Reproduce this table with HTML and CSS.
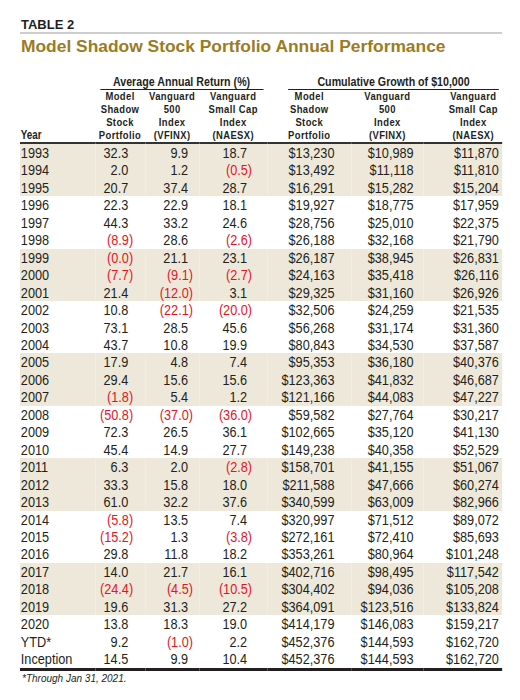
FILE: index.html
```html
<!DOCTYPE html>
<html lang="en">
<head>
<meta charset="UTF-8">
<meta name="viewport" content="width=device-width, initial-scale=1.0">
<title>Table 2 - Model Shadow Stock Portfolio Annual Performance</title>
<link rel="stylesheet" href="styles.css">
</head>
<body>
<div class="page">
<div class="label">TABLE 2</div>
<h1 class="title">Model Shadow Stock Portfolio Annual Performance</h1>

<div class="table-wrap">
<table class="perf">
<colgroup>
<col class="w-year"><col class="w-1"><col class="w-2"><col class="w-3"><col class="w-4"><col class="w-5"><col class="w-6">
</colgroup>
<thead>
<tr class="groups">
<th rowspan="2" class="h-year">Year</th>
<th colspan="3"><div class="group g-ret">Average Annual Return (%)</div></th>
<th colspan="3"><div class="group g-cum">Cumulative Growth of $10,000</div></th>
</tr>
<tr class="cols">
<th class="h1">Model<br>Shadow<br>Stock<br>Portfolio</th>
<th class="h2">Vanguard<br>500<br>Index<br>(VFINX)</th>
<th class="h3">Vanguard<br>Small Cap<br>Index<br>(NAESX)</th>
<th class="h4">Model<br>Shadow<br>Stock<br>Portfolio</th>
<th class="h5">Vanguard<br>500<br>Index<br>(VFINX)</th>
<th class="h6">Vanguard<br>Small Cap<br>Index<br>(NAESX)</th>
</tr>
</thead>
<tbody>
<tr class="band"><td>1993</td><td>32.3</td><td>9.9</td><td>18.7</td><td>$13,230</td><td>$10,989</td><td>$11,870</td></tr>
<tr class="band"><td>1994</td><td>2.0</td><td>1.2</td><td><span class="neg">(0.5)</span></td><td>$13,492</td><td>$11,118</td><td>$11,810</td></tr>
<tr class="band"><td>1995</td><td>20.7</td><td>37.4</td><td>28.7</td><td>$16,291</td><td>$15,282</td><td>$15,204</td></tr>
<tr><td>1996</td><td>22.3</td><td>22.9</td><td>18.1</td><td>$19,927</td><td>$18,775</td><td>$17,959</td></tr>
<tr><td>1997</td><td>44.3</td><td>33.2</td><td>24.6</td><td>$28,756</td><td>$25,010</td><td>$22,375</td></tr>
<tr><td>1998</td><td><span class="neg">(8.9)</span></td><td>28.6</td><td><span class="neg">(2.6)</span></td><td>$26,188</td><td>$32,168</td><td>$21,790</td></tr>
<tr class="band"><td>1999</td><td><span class="neg">(0.0)</span></td><td>21.1</td><td>23.1</td><td>$26,187</td><td>$38,945</td><td>$26,831</td></tr>
<tr class="band"><td>2000</td><td><span class="neg">(7.7)</span></td><td><span class="neg">(9.1)</span></td><td><span class="neg">(2.7)</span></td><td>$24,163</td><td>$35,418</td><td>$26,116</td></tr>
<tr class="band"><td>2001</td><td>21.4</td><td><span class="neg">(12.0)</span></td><td>3.1</td><td>$29,325</td><td>$31,160</td><td>$26,926</td></tr>
<tr><td>2002</td><td>10.8</td><td><span class="neg">(22.1)</span></td><td><span class="neg">(20.0)</span></td><td>$32,506</td><td>$24,259</td><td>$21,535</td></tr>
<tr><td>2003</td><td>73.1</td><td>28.5</td><td>45.6</td><td>$56,268</td><td>$31,174</td><td>$31,360</td></tr>
<tr><td>2004</td><td>43.7</td><td>10.8</td><td>19.9</td><td>$80,843</td><td>$34,530</td><td>$37,587</td></tr>
<tr class="band"><td>2005</td><td>17.9</td><td>4.8</td><td>7.4</td><td>$95,353</td><td>$36,180</td><td>$40,376</td></tr>
<tr class="band"><td>2006</td><td>29.4</td><td>15.6</td><td>15.6</td><td>$123,363</td><td>$41,832</td><td>$46,687</td></tr>
<tr class="band"><td>2007</td><td><span class="neg">(1.8)</span></td><td>5.4</td><td>1.2</td><td>$121,166</td><td>$44,083</td><td>$47,227</td></tr>
<tr><td>2008</td><td><span class="neg">(50.8)</span></td><td><span class="neg">(37.0)</span></td><td><span class="neg">(36.0)</span></td><td>$59,582</td><td>$27,764</td><td>$30,217</td></tr>
<tr><td>2009</td><td>72.3</td><td>26.5</td><td>36.1</td><td>$102,665</td><td>$35,120</td><td>$41,130</td></tr>
<tr><td>2010</td><td>45.4</td><td>14.9</td><td>27.7</td><td>$149,238</td><td>$40,358</td><td>$52,529</td></tr>
<tr class="band"><td>2011</td><td>6.3</td><td>2.0</td><td><span class="neg">(2.8)</span></td><td>$158,701</td><td>$41,155</td><td>$51,067</td></tr>
<tr class="band"><td>2012</td><td>33.3</td><td>15.8</td><td>18.0</td><td>$211,588</td><td>$47,666</td><td>$60,274</td></tr>
<tr class="band"><td>2013</td><td>61.0</td><td>32.2</td><td>37.6</td><td>$340,599</td><td>$63,009</td><td>$82,966</td></tr>
<tr><td>2014</td><td><span class="neg">(5.8)</span></td><td>13.5</td><td>7.4</td><td>$320,997</td><td>$71,512</td><td>$89,072</td></tr>
<tr><td>2015</td><td><span class="neg">(15.2)</span></td><td>1.3</td><td><span class="neg">(3.8)</span></td><td>$272,161</td><td>$72,410</td><td>$85,693</td></tr>
<tr><td>2016</td><td>29.8</td><td>11.8</td><td>18.2</td><td>$353,261</td><td>$80,964</td><td>$101,248</td></tr>
<tr class="band"><td>2017</td><td>14.0</td><td>21.7</td><td>16.1</td><td>$402,716</td><td>$98,495</td><td>$117,542</td></tr>
<tr class="band"><td>2018</td><td><span class="neg">(24.4)</span></td><td><span class="neg">(4.5)</span></td><td><span class="neg">(10.5)</span></td><td>$304,402</td><td>$94,036</td><td>$105,208</td></tr>
<tr class="band"><td>2019</td><td>19.6</td><td>31.3</td><td>27.2</td><td>$364,091</td><td>$123,516</td><td>$133,824</td></tr>
<tr><td>2020</td><td>13.8</td><td>18.3</td><td>19.0</td><td>$414,179</td><td>$146,083</td><td>$159,217</td></tr>
<tr><td>YTD*</td><td>9.2</td><td><span class="neg">(1.0)</span></td><td>2.2</td><td>$452,376</td><td>$144,593</td><td>$162,720</td></tr>
<tr class="last"><td>Inception</td><td>14.5</td><td>9.9</td><td>10.4</td><td>$452,376</td><td>$144,593</td><td>$162,720</td></tr>
</tbody>
</table>
</div>

<p class="note">*Through Jan 31, 2021.</p>
</div>
</body>
</html>
```

FILE: styles.css
```css
body {
    margin: 0;
    background: #fff;
    color: #231f20;
    font-family: "Liberation Sans", Arial, sans-serif;
}

.page {
    width: 482px;
    padding: 17px 18px 0 20px;
}

.label {
    font-weight: bold;
    font-size: 13px;
    line-height: 15px;
    padding-left: 1px;
    border-bottom: 2px solid #cdcdcd;
}

.title {
    font-weight: bold;
    font-size: 17.4px;
    line-height: 22px;
    color: #9c7b23;
    margin: 1px 0 0 1px;
}

/* the table is set in a condensed face: no narrow font is installed,
   so it is laid out 588px wide and squeezed to 482px */
.table-wrap {
    width: 482px;
    margin-top: 18px;
}

.perf {
    width: 588px;
    table-layout: fixed;
    border-collapse: separate;
    border-spacing: 0;
    transform: scaleX(0.82);
    transform-origin: 0 0;
}

.w-year { width: 91.5px; }
.w-1 { width: 61px; }
.w-2 { width: 66px; }
.w-3 { width: 83px; }
.w-4 { width: 102.5px; }
.w-5 { width: 88px; }
.w-6 { width: 96px; }

.perf th {
    font-weight: bold;
    font-size: 13px;
    padding: 0;
    white-space: nowrap;
}

.groups th {
    line-height: 14px;
}

.group {
    border-bottom: 1px solid #231f20;
    text-align: center;
}

.g-ret { margin: 0 5px 0 6px; }
.g-cum { margin: 0 4px 0 25.5px; }

.cols th {
    font-size: 11.5px;
    letter-spacing: 0.5px;
    line-height: 13px;
    text-align: center;
    border-bottom: 2px solid #333;
}

.h-year {
    text-align: left;
    vertical-align: bottom;
    font-size: 12px !important;
    line-height: 13px;
    padding-left: 1px !important;
    border-bottom: 2px solid #333;
}

.h6 { padding-left: 25.5px !important; }

.perf td {
    font-size: 15.5px;
    line-height: 17.45px;
    height: 17.45px;
    padding: 0;
    text-align: right;
    white-space: nowrap;
}

.perf td:nth-child(1) { text-align: left; padding-left: 1px; }
.perf td:nth-child(2) { padding-right: 20.5px; }
.perf td:nth-child(3) { padding-right: 13.5px; }
.perf td:nth-child(4) { padding-right: 24.5px; }
.perf td:nth-child(5) { padding-right: 20.5px; }
.perf td:nth-child(6) { padding-right: 12px; }
.perf td:nth-child(7) { padding-right: 4px; }

.band td {
    background: #ede8d9;
}

.last td {
    border-bottom: 3px solid #231f20;
}

.neg {
    color: #e3151f;
    margin-right: -6px;
}

.note {
    font-style: italic;
    font-size: 10px;
    line-height: 12px;
    margin: 2px 0 0 2px;
}
```
